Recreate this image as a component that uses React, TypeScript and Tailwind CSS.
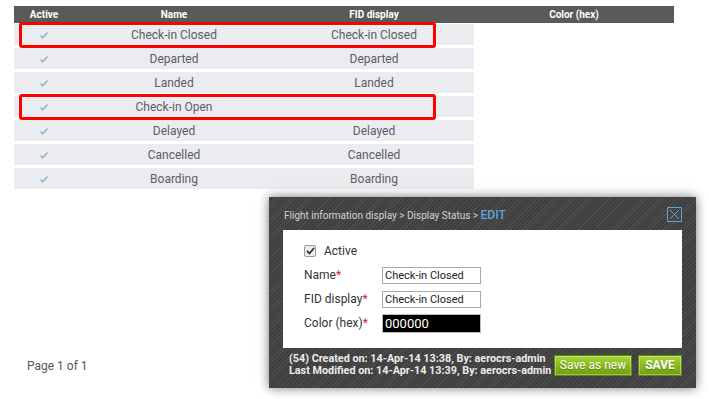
import React from 'react';

const rows = [
  { name: 'Check-in Closed', fid: 'Check-in Closed' },
  { name: 'Departed', fid: 'Departed' },
  { name: 'Landed', fid: 'Landed' },
  { name: 'Check-in Open', fid: '' },
  { name: 'Delayed', fid: 'Delayed' },
  { name: 'Cancelled', fid: 'Cancelled' },
  { name: 'Boarding', fid: 'Boarding' },
];

const Check = () => (
  <svg width="10" height="8" viewBox="0 0 10 8">
    <path d="M1.5 4.5 L3.8 6.8 L8.5 1.5" fill="none" stroke="#8fb6cf" strokeWidth="1.7" />
  </svg>
);

const Field = ({ label, value, dark }: { label: string; value: string; dark?: boolean }) => (
  <div className="flex items-center h-[24px]">
    <span className="w-[78px] text-[12px] text-[#333]">
      {label}
      <span className="text-[#e0202a]">*</span>
    </span>
    {dark ? (
      <div className="w-[99px] h-[19px] bg-black border border-[#bbb] text-white text-[13px] leading-[17px] px-[2px]">
        {value}
      </div>
    ) : (
      <div className="w-[99px] h-[17px] bg-white border border-[#aaa] text-[#222] text-[11px] leading-[15px] px-[2px]">
        {value}
      </div>
    )}
  </div>
);

export default function App() {
  return (
    <div className="relative w-[709px] h-[399px] bg-white overflow-hidden font-['Roboto',sans-serif]">
      {/* status table */}
      <div className="pt-[6px] pl-[14px]">
        <div className="flex w-[660px] h-[17px] bg-[#5a5a5a] text-white font-bold text-[10px] items-center">
          <div className="w-[60px] text-center">Active</div>
          <div className="w-[200px] text-center">Name</div>
          <div className="w-[200px] text-center">FID display</div>
          <div className="w-[200px] text-center">Color (hex)</div>
        </div>
        <div className="flex flex-col gap-[3px] mt-[1px]">
          {rows.map((r) => (
            <div key={r.name} className="flex w-[460px] h-[21px] bg-[#ebecf0] items-center text-[12px] text-[#5c5c66]">
              <div className="w-[60px] flex justify-center">
                <Check />
              </div>
              <div className="w-[200px] text-center">{r.name}</div>
              <div className="w-[200px] text-center">{r.fid}</div>
            </div>
          ))}
        </div>
        <div className="mt-[168px] ml-[13px] text-[12px] text-[#555]">Page 1 of 1</div>
      </div>

      {/* annotation boxes */}
      <div className="absolute left-[19px] top-[22px] w-[417px] h-[26px] border-[3px] border-[#ff0000] rounded-[3px]" />
      <div className="absolute left-[19px] top-[94px] w-[417px] h-[26px] border-[3px] border-[#ff0000] rounded-[3px]" />

      {/* edit dialog */}
      <div className="absolute left-[269px] top-[197px] w-[427px] h-[191px] bg-[#474747] bg-[repeating-linear-gradient(-45deg,#4e4e4e_0px,#4e4e4e_1px,#3f3f3f_1px,#3f3f3f_3px)] shadow-[0_0_10px_rgba(0,0,0,0.55)] flex flex-col px-[14px]">
        <div className="flex items-center justify-between h-[33px] pt-[2px]">
          <div className="text-[10px] text-[#d4d4d4] pl-[1px]">
            Flight information display &gt; Display Status &gt;{' '}
            <span className="text-[12px] text-[#5aa7d6] font-medium">EDIT</span>
          </div>
          <div className="w-[15px] h-[15px] border border-[#5aa7d6] flex items-center justify-center">
            <svg width="11" height="11" viewBox="0 0 11 11">
              <path d="M1 1 L10 10 M10 1 L1 10" stroke="#5aa7d6" strokeWidth="1" />
            </svg>
          </div>
        </div>
        <div className="bg-white h-[118px] pl-[21px] pt-[13px]">
          <div className="flex items-center h-[16px] mb-[4px]">
            <div className="w-[12px] h-[12px] rounded-[2px] border border-[#999] bg-[#ececec] flex items-center justify-center">
              <svg width="9" height="8" viewBox="0 0 9 8">
                <path d="M1 4 L3.5 6.5 L8 1" fill="none" stroke="#333" strokeWidth="1.8" />
              </svg>
            </div>
            <span className="ml-[8px] text-[12px] text-[#333]">Active</span>
          </div>
          <Field label="Name" value="Check-in Closed" />
          <Field label="FID display" value="Check-in Closed" />
          <Field label="Color (hex)" value="000000" dark />
        </div>
        <div className="flex items-center justify-between mt-[5px] pl-[6px]">
          <div className="text-[10.8px] font-bold text-[#ececec] leading-[12px]">
            <div>(54) Created on: 14-Apr-14 13:38, By: aerocrs-admin</div>
            <div>Last Modified on: 14-Apr-14 13:39, By: aerocrs-admin</div>
          </div>
          <div className="flex gap-[6px]">
            <div className="w-[78px] h-[21px] border border-[#5d8a08] bg-gradient-to-b from-[#a8d630] to-[#6d9e0c] shadow-[inset_0_0_0_1px_rgba(255,255,255,0.35)] text-white text-[12px] [text-shadow:0_1px_1px_rgba(0,0,0,0.3)] flex items-center justify-center">
              Save as new
            </div>
            <div className="w-[44px] h-[21px] border border-[#5d8a08] bg-gradient-to-b from-[#a8d630] to-[#6d9e0c] shadow-[inset_0_0_0_1px_rgba(255,255,255,0.35)] text-white text-[12px] font-bold [text-shadow:0_1px_1px_rgba(0,0,0,0.3)] flex items-center justify-center">
              SAVE
            </div>
          </div>
        </div>
      </div>
    </div>
  );
}
